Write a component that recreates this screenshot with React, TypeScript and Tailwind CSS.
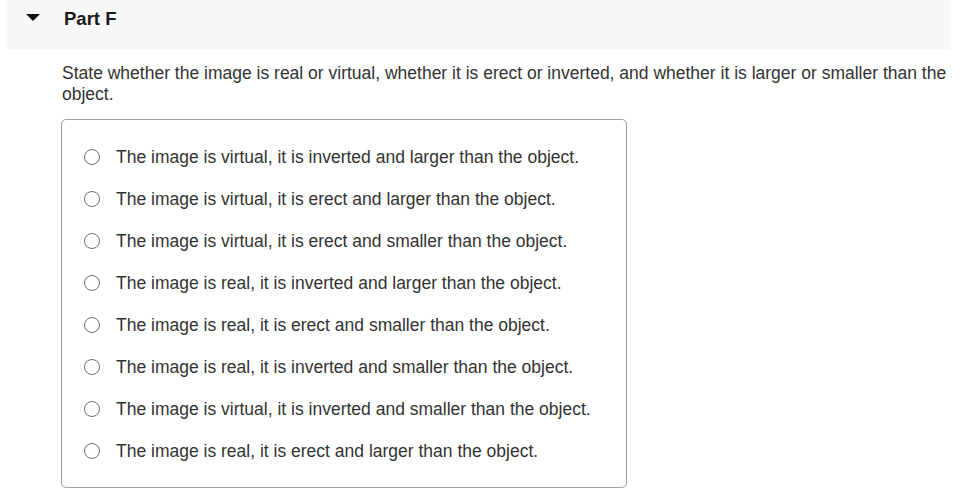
import React from "react";

const options = [
  "The image is virtual, it is inverted and larger than the object.",
  "The image is virtual, it is erect and larger than the object.",
  "The image is virtual, it is erect and smaller than the object.",
  "The image is real, it is inverted and larger than the object.",
  "The image is real, it is erect and smaller than the object.",
  "The image is real, it is inverted and smaller than the object.",
  "The image is virtual, it is inverted and smaller than the object.",
  "The image is real, it is erect and larger than the object.",
];

export default function App() {
  return (
    <div className="h-[504px] w-[966px] overflow-hidden bg-white font-['Liberation_Sans',Arial,sans-serif] text-[#222]">
      {/* Part header */}
      <div className="ml-[7px] mr-[15px] flex h-[49px] items-start bg-[#f8f8f8]">
        <svg width="14" height="7" viewBox="0 0 14 7" className="ml-[19px] mt-[14px]">
          <path d="M0 0 L14 0 L7 7 Z" fill="#111" />
        </svg>
        <span className="ml-[24px] mt-[9px] text-[18.5px] font-bold leading-5 text-[#1a1a1a]">Part F</span>
      </div>

      <p className="ml-[62px] mr-[14px] mt-[14px] text-[17.5px] leading-[21px] text-[#333]">
        State whether the image is real or virtual, whether it is erect or inverted, and whether it is larger or smaller than the object.
      </p>

      {/* Answer choices */}
      <div className="ml-[61px] mt-[14px] w-[566px] rounded-[5px] border border-[#a0a0a0] pb-[15px] pt-[16px]">
        {options.map((text, i) => (
          <label key={i} className="flex h-[42px] items-center">
            <span className="ml-[22px] h-[16px] w-[16px] shrink-0 rounded-full border border-[#6f6f6f] bg-white" />
            <span className="ml-[16px] text-[17.5px] leading-5 text-[#333]">{text}</span>
          </label>
        ))}
      </div>
    </div>
  );
}
